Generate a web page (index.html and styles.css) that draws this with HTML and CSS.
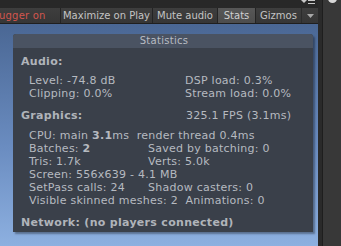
FILE: index.html
```html
<!DOCTYPE html>
<html>
<head>
<meta charset="utf-8">
<link rel="stylesheet" href="styles.css">
</head>
<body>
<div class="app">
  <div class="main">
    <div class="tabstrip">
      <svg class="tabmenu" width="14" height="6" viewBox="0 0 14 6">
        <path d="M0 0 L3 3 L6 0 Z" fill="#c8c8c8"/>
        <rect x="7" y="0" width="7" height="1" fill="#c8c8c8"/>
        <rect x="7" y="3" width="7" height="1" fill="#c8c8c8"/>
      </svg>
    </div>
    <div class="toolbar">
      <div class="tb-red">ugger on</div>
      <div class="tb-btn tb-max">Maximize on Play</div>
      <div class="tb-btn tb-mute">Mute audio</div>
      <div class="tb-btn tb-stats">Stats</div>
      <div class="tb-btn tb-gizmos">Gizmos</div>
      <div class="tb-btn tb-drop"><svg width="7" height="4" viewBox="0 0 7 4"><path d="M0 0 L7 0 L3.5 4 Z" fill="#a8a8a8"/></svg></div>
    </div>
    <div class="game">
      <div class="panel">
        <div class="panel-title">Statistics</div>
        <div class="panel-body">
          <div class="head">Audio:</div>
          <div class="grid audio">
            <div>Level: -74.8 dB</div><div>DSP load: 0.3%</div>
            <div>Clipping: 0.0%</div><div>Stream load: 0.0%</div>
          </div>
          <div class="headrow">
            <div class="head">Graphics:</div>
            <div>325.1 FPS (3.1ms)</div>
          </div>
          <div class="rows">
            <div class="pre">CPU: main <b>3.1</b>ms  render thread 0.4ms</div>
            <div class="grid gfx">
              <div>Batches: <b>2</b></div><div>Saved by batching: 0</div>
              <div>Tris: 1.7k</div><div>Verts: 5.0k</div>
            </div>
            <div>Screen: 556x639 - 4.1 MB</div>
            <div class="grid gfx">
              <div>SetPass calls: 24</div><div>Shadow casters: 0</div>
            </div>
            <div class="pre">Visible skinned meshes: 2  Animations: 0</div>
          </div>
          <div class="head net">Network: (no players connected)</div>
        </div>
      </div>
    </div>
  </div>
  <div class="side">
    <div class="side-gap"></div>
    <div class="side-pane"><span class="side-dot"></span></div>
  </div>
</div>
</body>
</html>
```
FILE: styles.css
```css
html, body {
  margin: 0;
  padding: 0;
}
body {
  width: 341px;
  height: 246px;
  overflow: hidden;
  background: #2a2a2a;
  font-family: "DejaVu Sans", sans-serif;
  font-size: 10px;
}
.app {
  display: flex;
  height: 246px;
}
.main {
  width: 318px;
  display: flex;
  flex-direction: column;
}
.tabstrip {
  height: 8px;
  background: #282828;
  display: flex;
  justify-content: flex-end;
  align-items: flex-start;
  padding-right: 3px;
}
.tabmenu {
  display: block;
}
.toolbar {
  height: 15px;
  background: linear-gradient(#3e3e3e, #363636);
  border-bottom: 1px solid #1f1f1f;
  display: flex;
  align-items: stretch;
  color: #c4c4c4;
  line-height: 15px;
}
.tb-red {
  flex: 1;
  color: #d2564e;
  white-space: nowrap;
  margin-left: -1px;
  letter-spacing: 0.2px;
}
.tb-btn {
  box-sizing: border-box;
  display: flex;
  align-items: center;
  justify-content: center;
  border-left: 1px solid #242424;
  white-space: nowrap;
  flex: 0 0 auto;
}
.tb-max {
  width: 92px;
}
.tb-mute {
  width: 65px;
}
.tb-stats {
  width: 38px;
  background: linear-gradient(#575757, #4d4d4d);
  color: #d0d0d0;
}
.tb-gizmos {
  width: 46px;
}
.tb-drop {
  width: 17px;
  border-left-color: #2c2c2c;
}
.game {
  flex: 1;
  background: linear-gradient(#4a6794, #6a8cc0 55%, #8db0e0);
  padding: 10px 0 0 13px;
}
.panel {
  width: 300px;
  height: 198px;
  background: #3a404a;
  border-radius: 3px 3px 0 0;
  box-shadow: 2px 2px 2px rgba(0, 0, 0, 0.35);
  color: #b6bac0;
  display: flex;
  flex-direction: column;
}
.panel-title {
  height: 14px;
  line-height: 14px;
  background: #4a5362;
  border-radius: 3px 3px 0 0;
  text-align: center;
  color: #b8bcc2;
  padding-left: 2px;
  letter-spacing: 0.3px;
}
.panel-body {
  padding: 7px 0 0 8px;
  line-height: 13px;
  font-size: 11px;
  letter-spacing: 0.25px;
}
.head {
  font-weight: bold;
  color: #b0b4ba;
  letter-spacing: 0.3px;
}
.grid {
  display: grid;
}
.audio {
  grid-template-columns: 156px 1fr;
  margin: 6px 0 0 8px;
}
.headrow {
  display: grid;
  grid-template-columns: 165px 1fr;
  margin-top: 9px;
}
.rows {
  margin: 7px 0 0 8px;
}
.gfx {
  grid-template-columns: 119px 1fr;
}
.pre {
  white-space: pre;
}
.net {
  margin-top: 9px;
}
.side {
  width: 23px;
  display: flex;
}
.side-gap {
  width: 4px;
  background: #2a2a2a;
  border-right: 1px solid #1e1e1e;
}
.side-pane {
  flex: 1;
  background: #383838;
  position: relative;
  overflow: hidden;
}
.side-dot {
  position: absolute;
  left: 5px;
  top: -6px;
  width: 9px;
  height: 9px;
  border-radius: 50%;
  background: #d8d8d8;
}
```
